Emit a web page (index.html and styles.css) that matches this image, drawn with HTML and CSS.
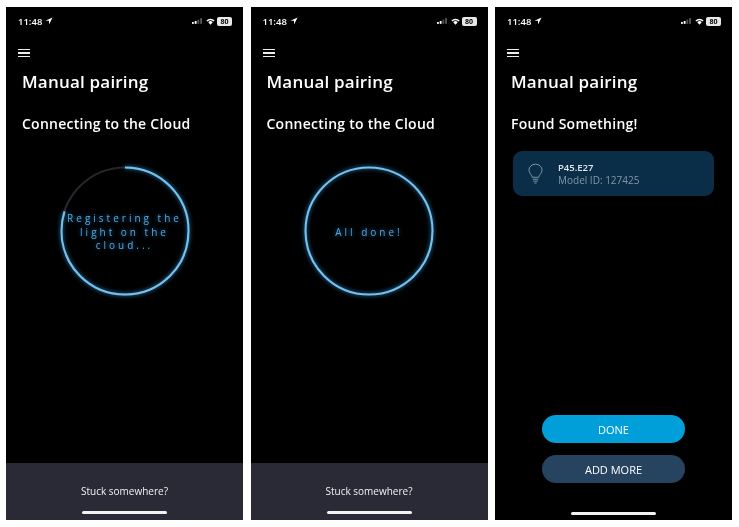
FILE: index.html
```html
<!DOCTYPE html>
<html lang="en">
<head>
  <meta charset="UTF-8">
  <meta name="viewport" content="width=device-width, initial-scale=1.0">
  <title>Manual pairing</title>
  <link rel="stylesheet" href="styles.css">
</head>
<body>
  <div class="phone">
    <div class="status">
      <span class="time">11:48</span>
      <svg class="arrow" viewBox="0 0 10 10"><path d="M9.5 .5 L.5 4.6 H5 V9.5 Z"/></svg>
      <svg class="signal" viewBox="0 0 14 8"><rect x="0" y="5.5" width="2.6" height="2.5" fill="#fff"/><rect x="3.8" y="4" width="2.6" height="4" fill="#fff"/><rect x="7.6" y="2" width="2.6" height="6" fill="#555"/><rect x="11.4" y="0" width="2.6" height="8" fill="#555"/></svg>
      <svg class="wifi" viewBox="0 0 12 9"><path d="M.5 3 A8 8 0 0 1 11.5 3 L10 4.6 A6 6 0 0 0 2 4.6 Z M3 5.5 A4.2 4.2 0 0 1 9 5.5 L6 8.8 Z"/></svg>
      <span class="battery">80</span>
    </div>
    <div class="menu"><i></i><i></i><i></i></div>
    <h1>Manual pairing</h1>
    <h2>Connecting to the Cloud</h2>
    <div class="ring">
      <svg viewBox="0 0 140 140">
        <circle class="track" cx="70" cy="70" r="63.5"/>
        <circle class="glow" cx="70" cy="70" r="63.5" pathLength="100" stroke-dasharray="80 100" transform="rotate(-90 70 70)"/>
      </svg>
      <p>Registering the light on the cloud...</p>
    </div>
    <div class="footer">
      <span>Stuck somewhere?</span>
      <div class="home"></div>
    </div>
  </div>

  <div class="phone">
    <div class="status">
      <span class="time">11:48</span>
      <svg class="arrow" viewBox="0 0 10 10"><path d="M9.5 .5 L.5 4.6 H5 V9.5 Z"/></svg>
      <svg class="signal" viewBox="0 0 14 8"><rect x="0" y="5.5" width="2.6" height="2.5" fill="#fff"/><rect x="3.8" y="4" width="2.6" height="4" fill="#fff"/><rect x="7.6" y="2" width="2.6" height="6" fill="#555"/><rect x="11.4" y="0" width="2.6" height="8" fill="#555"/></svg>
      <svg class="wifi" viewBox="0 0 12 9"><path d="M.5 3 A8 8 0 0 1 11.5 3 L10 4.6 A6 6 0 0 0 2 4.6 Z M3 5.5 A4.2 4.2 0 0 1 9 5.5 L6 8.8 Z"/></svg>
      <span class="battery">80</span>
    </div>
    <div class="menu"><i></i><i></i><i></i></div>
    <h1>Manual pairing</h1>
    <h2>Connecting to the Cloud</h2>
    <div class="ring">
      <svg viewBox="0 0 140 140">
        <circle class="glow" cx="70" cy="70" r="63.5"/>
      </svg>
      <p>All done!</p>
    </div>
    <div class="footer">
      <span>Stuck somewhere?</span>
      <div class="home"></div>
    </div>
  </div>

  <div class="phone">
    <div class="status">
      <span class="time">11:48</span>
      <svg class="arrow" viewBox="0 0 10 10"><path d="M9.5 .5 L.5 4.6 H5 V9.5 Z"/></svg>
      <svg class="signal" viewBox="0 0 14 8"><rect x="0" y="5.5" width="2.6" height="2.5" fill="#fff"/><rect x="3.8" y="4" width="2.6" height="4" fill="#fff"/><rect x="7.6" y="2" width="2.6" height="6" fill="#555"/><rect x="11.4" y="0" width="2.6" height="8" fill="#555"/></svg>
      <svg class="wifi" viewBox="0 0 12 9"><path d="M.5 3 A8 8 0 0 1 11.5 3 L10 4.6 A6 6 0 0 0 2 4.6 Z M3 5.5 A4.2 4.2 0 0 1 9 5.5 L6 8.8 Z"/></svg>
      <span class="battery">80</span>
    </div>
    <div class="menu"><i></i><i></i><i></i></div>
    <h1>Manual pairing</h1>
    <h2>Found Something!</h2>
    <div class="card">
      <svg class="bulb" viewBox="0 0 16 22" fill="none" stroke="#8ea3b2" stroke-width="0.9">
        <path d="M4.6 14.5 C4.2 11.5 1 10.5 1 6.8 A7 6.3 0 0 1 15 6.8 C15 10.5 11.8 11.5 11.4 14.5 Z"/>
        <path d="M5 16.6 H11 M5.5 18.6 H10.5 M6.8 20.6 H9.2"/>
      </svg>
      <div class="card-text">
        <b>P45.E27</b>
        <span>Model ID: 127425</span>
      </div>
    </div>
    <div class="actions">
      <button class="btn btn-done">DONE</button>
      <button class="btn btn-more">ADD MORE</button>
    </div>
    <div class="home home-last"></div>
  </div>
</body>
</html>
```

FILE: styles.css
```css
html, body {
  margin: 0;
  padding: 0;
  background: #fff;
}

body {
  display: flex;
  gap: 7.5px;
  padding: 7px 0 0 6px;
  font-family: "Open Sans", Arial, sans-serif;
  color: #fff;
}

.phone {
  width: 237px;
  height: 513px;
  background: #000;
  display: flex;
  flex-direction: column;
  filter: blur(0.55px);
}

/* status bar */
.status {
  height: 28px;
  padding: 0 11px 0 12px;
  display: flex;
  align-items: center;
  box-sizing: border-box;
}

.time {
  font-size: 9.5px;
  font-weight: 600;
}

.arrow {
  width: 8px;
  height: 8px;
  margin-left: 3px;
  fill: #fff;
}

.signal {
  width: 10px;
  height: 6px;
  margin-left: auto;
}

.wifi {
  width: 9px;
  height: 7px;
  margin-left: 4px;
  fill: #fff;
}

.battery {
  width: 15px;
  height: 9px;
  line-height: 9px;
  margin-left: 2px;
  background: #e8e8e8;
  color: #000;
  border-radius: 2px;
  font-size: 7px;
  font-weight: 700;
  text-align: center;
}

.menu {
  width: 12px;
  margin: 14px 0 0 12px;
  display: flex;
  flex-direction: column;
  gap: 2px;
}

.menu i {
  display: block;
  height: 1.4px;
  background: #eee;
}

h1 {
  margin: 12px 0 0 16px;
  font-size: 17px;
  line-height: 26px;
  font-weight: 600;
  letter-spacing: 0.2px;
}

h2 {
  margin: 19px 0 0 16px;
  font-size: 14px;
  line-height: 20px;
  font-weight: 600;
  letter-spacing: 0.25px;
}

/* progress ring */
.ring {
  display: grid;
  width: 140px;
  height: 140px;
  margin: 27px 0 0 48.5px;
  place-items: center;
}

.ring svg, .ring p {
  grid-area: 1 / 1;
}

.ring svg {
  width: 140px;
  height: 140px;
}

.track, .glow {
  fill: none;
  stroke-width: 2.1;
}

.track {
  stroke: #26262c;
}

.glow {
  stroke: #78c0ec;
  filter: drop-shadow(0 0 2px #2f8fd0);
}

.ring p {
  margin: 0;
  padding-top: 3px;
  width: 126px;
  font-size: 10px;
  line-height: 13.5px;
  letter-spacing: 3px;
  text-align: center;
  color: #5aa6da;
  text-shadow: 0 0 4px #1f78b8;
}

.footer {
  margin-top: auto;
  height: 57px;
  background: #2a2a36;
  display: flex;
  flex-direction: column;
  align-items: center;
}

.footer span {
  margin-top: 21px;
  font-size: 10px;
  line-height: 14px;
  color: #f0f0f0;
}

.home {
  width: 85px;
  height: 2.5px;
  background: #f2f2f2;
  border-radius: 2px;
}

.footer .home {
  margin-top: 13px;
}

.home-last {
  margin: 29px auto 5.5px;
}

/* found device */
.card {
  margin: 17px 18px 0;
  height: 45px;
  background: #0a2e48;
  border-radius: 9px;
  display: flex;
  align-items: center;
}

.bulb {
  width: 15px;
  height: 22px;
  margin-left: 15px;
}

.card-text {
  margin-left: 15px;
  display: flex;
  flex-direction: column;
  font-size: 9.5px;
  line-height: 13px;
}

.card-text b {
  font-weight: 600;
  color: #dfe6ea;
}

.card-text span {
  font-size: 10px;
  color: #8296a6;
}

.actions {
  margin-top: auto;
  display: flex;
  flex-direction: column;
  align-items: center;
  gap: 12px;
}

.btn {
  width: 143px;
  height: 28px;
  border: none;
  border-radius: 14px;
  padding: 0;
  font-family: inherit;
  font-size: 11px;
  color: #fff;
}

.btn-done {
  background: #009fd9;
}

.btn-more {
  background: #26435f;
}
```
